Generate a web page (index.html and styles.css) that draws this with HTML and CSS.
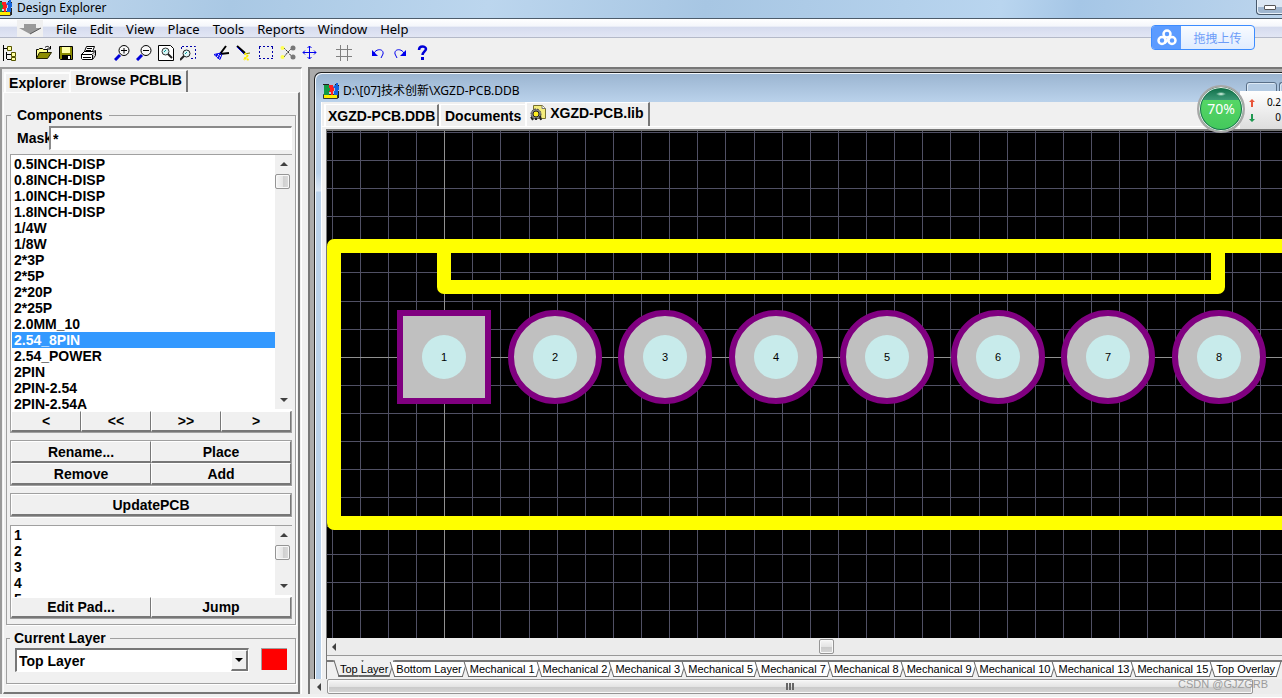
FILE: index.html
```html
<!DOCTYPE html>
<html lang="en">
<head>
<meta charset="utf-8">
<title>Design Explorer</title>
<link rel="stylesheet" href="styles.css">
</head>
<body>
<svg class="defs" aria-hidden="true">
  <symbol id="puzzle" viewBox="0 0 16 16">
    <path fill="#ffee00" stroke="#333" d="M.5 11.500h14v4h-14z"/>
    <path fill="#119a44" d="M1 2h5v3h1v3H6v4H1z"/>
    <path fill="#ff1e1e" d="M6 2h4v2h1v4h-1v4H8V9H6V8h1V5H6z"/>
    <path fill="#1464dc" d="M10 4l2-2h1V0h2v3h1v4h-1v5h-4V8h1V5h-1z"/>
    <path fill="#222" d="M12 1h1v1h-1zM15 2h1v1h-1zM0 1h6v1H0zM15 8h1v7h-1z"/>
  </symbol>
  <symbol id="lens" viewBox="0 0 16 16">
    <path stroke="#0000d8" stroke-width="3" d="M6 10l-5 5"/>
    <circle cx="10" cy="5.500" r="5" fill="#f8f8f8" stroke="#000"/>
  </symbol>
</svg>

<header class="titlebar">
  <svg class="app-icon"><use href="#puzzle"/></svg>
  <h1>Design Explorer</h1>
  <button class="caption-btn" aria-label="Minimize"><span></span></button>
</header>

<nav class="menubar">
  <button class="menu-arrow" aria-label="System menu"><svg width="22" height="12" viewBox="0 0 22 12"><path fill="#999" d="M5 1h12v4h5L11 11 0 5h5z"/><path fill="none" stroke="#555" d="M22 5L11 11"/></svg></button>
  <button>File</button><button>Edit</button><button>View</button><button>Place</button><button>Tools</button><button>Reports</button><button>Window</button><button>Help</button>
</nav>

<div class="toolbar">
  <div class="tools">
    <button aria-label="Panel tree"><svg viewBox="0 0 16 16"><path fill="none" stroke="#000" d="M1.500 0v16M1 3.500h4M4.500 7v7M5 9.500h4M5 14.500h4"/><path fill="#ffffa0" stroke="#555500" d="M5.500 1.500h4v4h-4zM9.500 7.500h4v4h-4zM9.500 12.500h4v3h-4z"/></svg></button>
  </div>
  <div class="tools">
    <button aria-label="Open"><svg viewBox="0 0 16 16"><path fill="#ffff90" stroke="#000" d="M.5 13.500v-9h2l1-1h3l1 1h4v3"/><path fill="#8c8c00" stroke="#222200" d="M.5 13.500l3-6h12l-4 6z"/><path fill="none" stroke="#000" d="M9 2.500c2-2 4-1 5 1M14.500 1v3H11"/></svg></button>
    <button aria-label="Save"><svg viewBox="0 0 16 16"><path fill="#8c8c00" stroke="#000" d="M1.500 1.500h13v13h-12l-1-1z"/><path fill="#ffffa8" d="M4 2h8v6H4z"/><path fill="#000" d="M4 10h9v5H4z"/><path fill="#fff" d="M10 11h2v3h-2z"/></svg></button>
    <button aria-label="Print"><svg viewBox="0 0 16 16"><path fill="#fff" stroke="#000" d="M4.500 6.500l2-5h8l-2 5zM1.500 9.500l3-3h9l2-1v5l-3 4h-10l-1-1z"/><path fill="none" stroke="#000" d="M7 3.500h5M6 5.500h5M1 9.500h11l3-3M12.500 10v4M3 12.500h8"/><path fill="#bbb" d="M13 10l2-2v2l-2 3z"/></svg></button>
  </div>
  <div class="tools">
    <button aria-label="Zoom in"><svg viewBox="0 0 16 16"><use href="#lens"/><path stroke="#000" d="M7 5.500h6M10 3v5.500"/></svg></button>
    <button aria-label="Zoom out"><svg viewBox="0 0 16 16"><use href="#lens"/><path stroke="#000" d="M7 5.500h6"/></svg></button>
    <button aria-label="Zoom document"><svg viewBox="0 0 16 16"><path fill="#fff" stroke="#000" d="M.5.5h12l3 3v12H.5z"/><circle cx="7.500" cy="6.500" r="3.500" fill="#d8f4f4" stroke="#333"/><path stroke="#222" stroke-width="2" d="M10 9l4 4"/><path stroke="#009999" d="M6 7l2-2"/></svg></button>
    <button aria-label="Zoom area"><svg viewBox="0 0 16 16"><path fill="none" stroke="#0000a8" stroke-dasharray="2 2" d="M2 1.500h13.500v12H9M1.500 2v3"/><circle cx="6.500" cy="8.500" r="3.500" fill="#e0f6f6" stroke="#222"/><path stroke="#222" stroke-width="2" d="M4 11l-4 4"/><path stroke="#009999" d="M5 9l2-2"/></svg></button>
  </div>
  <div class="tools">
    <button aria-label="Cut"><svg viewBox="0 0 16 16"><path stroke="#000" stroke-width="2" d="M6 9l6-8M6 9l9-1"/><path fill="none" stroke="#0000ee" d="M7 8L0 9.500l6 5L8 9M2 9l5 4M4 9L2 11M6 8L4 14"/></svg></button>
    <button aria-label="Paste"><svg viewBox="0 0 16 16"><path stroke="#000" stroke-width="2" d="M1 1l8 7"/><path stroke="#0000d8" d="M1 2l7 7"/><path stroke="#777700" d="M8 9l6-1"/><path stroke="#ffee00" stroke-width="2" stroke-dasharray="2 1" d="M9 8l3 5M8 13l5 2M12 10l-4 5"/></svg></button>
    <button aria-label="Select area"><svg viewBox="0 0 16 16"><path fill="none" stroke="#0000a8" stroke-dasharray="2 2" d="M1 1.500h14M1 13.500h14M1.500 2v12M14.500 2v12"/></svg></button>
    <button aria-label="Deselect"><svg viewBox="0 0 16 16"><path fill="none" stroke="#222" stroke-dasharray="2 1" d="M4 3l4 4 4-4M4 12l4-5 4 5"/><circle cx="2.500" cy="3" r="2" fill="#ffff50"/><circle cx="2.500" cy="12" r="2" fill="#ffff50"/><circle cx="13" cy="3" r="2.500" fill="#777"/><circle cx="13" cy="12" r="2.500" fill="#777"/></svg></button>
    <button aria-label="Move"><svg viewBox="0 0 16 16"><path fill="none" stroke="#0000ee" d="M7.500 1v13M1 7.500h13M5.500 3l2-2 2 2M5.500 12l2 2 2-2M3 5.500l-2 2 2 2M12 5.500l2 2-2 2"/></svg></button>
  </div>
  <div class="tools">
    <button aria-label="Grid"><svg viewBox="0 0 16 16"><path stroke="#808080" d="M4.500 0v16M11.500 0v16M0 4.500h16M0 11.500h16"/></svg></button>
  </div>
  <div class="tools">
    <button aria-label="Undo"><svg viewBox="0 0 16 16"><path fill="none" stroke="#0000ee" d="M4 8c3-5 10-4 9 1l-2 4"/><path fill="#0000ee" d="M2 5v6h6z"/></svg></button>
    <button aria-label="Redo"><svg viewBox="0 0 16 16"><path fill="none" stroke="#0000ee" d="M12 8C9 3 2 4 3 9l2 4"/><path fill="#0000ee" d="M14 5v6H8z"/></svg></button>
    <button aria-label="Help"><svg viewBox="0 0 16 16"><path fill="none" stroke="#0000d8" stroke-width="2.500" d="M5 5c0-5 7-4 7-1 0 2-3.500 3-3.500 6"/><path fill="#0000d8" d="M7 12h3v3H7z"/></svg></button>
  </div>
</div>

<main class="workspace">
  <aside class="sidebar">
    <div class="side-tabs">
      <button class="tab">Explorer</button>
      <button class="tab active">Browse PCBLIB</button>
    </div>
    <div class="side-page">
      <fieldset>
        <legend>Components</legend>
        <div class="mask"><label for="mask">Mask</label><input id="mask" type="text" value="*"></div>
        <div class="listbox">
          <select size="16" aria-label="Components">
            <option>0.5INCH-DISP</option><option>0.8INCH-DISP</option><option>1.0INCH-DISP</option><option>1.8INCH-DISP</option>
            <option>1/4W</option><option>1/8W</option><option>2*3P</option><option>2*5P</option><option>2*20P</option><option>2*25P</option>
            <option>2.0MM_10</option><option selected>2.54_8PIN</option><option>2.54_POWER</option><option>2PIN</option><option>2PIN-2.54</option><option>2PIN-2.54A</option>
          </select>
          <div class="vscroll"><button class="up" aria-label="Scroll up"></button><span class="thumb"></span><button class="down" aria-label="Scroll down"></button></div>
        </div>
        <div class="buttons four"><button>&lt;</button><button>&lt;&lt;</button><button>&gt;&gt;</button><button>&gt;</button></div>
        <div class="buttons two spaced"><button>Rename...</button><button>Place</button><button>Remove</button><button>Add</button></div>
        <div class="buttons one spaced"><button>UpdatePCB</button></div>
        <div class="listbox pins">
          <select size="4" aria-label="Pads">
            <option>1</option><option>2</option><option>3</option><option>4</option><option>5</option><option>6</option><option>7</option><option>8</option>
          </select>
          <div class="vscroll"><button class="up" aria-label="Scroll up"></button><span class="thumb"></span><button class="down" aria-label="Scroll down"></button></div>
        </div>
        <div class="buttons two"><button>Edit Pad...</button><button>Jump</button></div>
      </fieldset>
      <fieldset class="layer">
        <legend>Current Layer</legend>
        <div class="layer-row">
          <div class="combo"><select aria-label="Current layer"><option>Top Layer</option><option>Bottom Layer</option></select><span class="drop"></span></div>
          <button class="swatch" aria-label="Layer colour"></button>
        </div>
      </fieldset>
    </div>
  </aside>

  <section class="mdi">
    <div class="doc">
      <div class="doc-title">
        <svg class="app-icon"><use href="#puzzle"/></svg>
        <h2>D:\[07]技术创新\XGZD-PCB.DDB</h2>
        <button aria-label="Minimize document"></button><button class="cut" aria-label="Restore document"></button>
      </div>
      <div class="doc-body">
        <div class="doc-tabs">
          <button class="tab divided">XGZD-PCB.DDB</button>
          <button class="tab">Documents</button>
          <button class="tab active"><svg width="16" height="16" viewBox="0 0 16 16"><path fill="#f4ec7c" stroke="#777030" d="M3.500.5h9l3 3v10h-12z"/><path fill="#fff" stroke="#777" d="M12 .5v3h3.500"/><circle cx="6" cy="9" r="5" fill="#888" stroke="#444" stroke-dasharray="2 1"/><circle cx="6" cy="9" r="3" fill="#ffee20" stroke="#222"/><path stroke="#222" stroke-width="2" d="M1 12l2 3M10 11l1 4M6 13v2"/></svg>XGZD-PCB.lib</button>
        </div>
        <div class="view">
          <div class="board">
            <svg class="pcb" width="100%" height="100%" role="img" aria-label="2.54_8PIN footprint">
              <rect width="100%" height="100%" fill="#000"/>
              <g id="grid"></g>
              <g class="track"><path d="M3000 115H7V392H3000"/><path d="M117 115V156H891V115"/></g>
              <g id="pads"></g>
            </svg>
          </div>
          <div class="hscroll inner"><button class="left" aria-label="Scroll left"></button><span class="thumb"></span></div>
          <div class="layers">
            <button class="active">Top Layer</button><button>Bottom Layer</button><button>Mechanical 1</button><button>Mechanical 2</button><button>Mechanical 3</button><button>Mechanical 5</button><button>Mechanical 7</button><button>Mechanical 8</button><button>Mechanical 9</button><button>Mechanical 10</button><button>Mechanical 13</button><button>Mechanical 15</button><button>Top Overlay</button>
          </div>
        </div>
      </div>
    </div>
    <div class="hscroll outer"><button class="left" aria-label="Scroll left"></button><span class="thumb"><i></i><i></i><i></i></span></div>
  </section>
</main>

<button class="upload"><span class="cloud"><svg width="20" height="18" viewBox="0 0 20 18"><g fill="none" stroke="#fff" stroke-width="2.500"><circle cx="10" cy="5" r="3.500"/><circle cx="5" cy="11.500" r="3.500"/><circle cx="15" cy="11.500" r="3.500"/><path d="M7.500 14l5-5"/></g></svg></span><span class="upload-text">拖拽上传</span></button>

<div class="net"><p><svg width="6" height="8" viewBox="0 0 6 8"><path fill="#e8553a" d="M3 0l3 3H4v5H2V3H0z"/></svg><span>0.2</span></p><p><svg width="6" height="8" viewBox="0 0 6 8"><path fill="#1f9850" d="M3 8L0 5h2V0h2v5h2z"/></svg><span>0</span></p></div>
<div class="ball"><span>70%</span></div>
<div class="watermark">CSDN @GJZGRB</div>
<script src="board.js"></script>
</body>
</html>
```

FILE: styles.css
```css
* { box-sizing: border-box; }
html, body { height: 100%; }
body {
  margin: 0; display: flex; flex-direction: column; overflow: hidden; position: relative;
  background: #f0f0f0; color: #000;
  font: bold 14px/16px "Liberation Sans", Arial, sans-serif;
}
button, input, select, option { font: inherit; color: inherit; margin: 0; padding: 0; border: 0; border-radius: 0; background: none; }
h1, h2, p { margin: 0; font: inherit; }
.defs { position: absolute; width: 0; height: 0; }
.app-icon { width: 16px; height: 16px; flex: none; }

.titlebar {
  height: 19px; flex: none; display: flex; align-items: flex-start; padding-left: 0;
  background: linear-gradient(100deg, #c3d9ee 0, #a9c8e4 18%, #bcd6ee 38%, #a7c6e3 55%, #b9d5ef 78%, #a5c6e6 84%, #bcd5ed 100%);
  border-bottom: 1px solid #4d5c6b;
}
.titlebar .app-icon { margin-left: -4px; }
.titlebar h1 { flex: 1; padding-left: 5px; font: 12px/16px "Noto Sans", "Open Sans", sans-serif; }
.caption-btn { width: 26px; height: 15px; border: 1px solid #46586b; border-width: 0 0 1px 1px; border-bottom-left-radius: 4px; background: linear-gradient(#dbe7f3 50%, #9fb6cf 50%); box-shadow: inset 1px -1px #e8f1fa; display: grid; place-items: center; }
.caption-btn span { width: 12px; height: 5px; background: #fff; border: 1px solid #555; border-radius: 1px; }

.menubar {
  height: 19px; flex: none; display: flex; align-items: center; gap: 13px; padding: 1px 0 0 17px;
  background: linear-gradient(#fff 0, #f4f6fb 40%, #d5dbee 45%, #e2e6f4 100%);
  border-bottom: 1px solid #b4b9c8;
  font: 13px/18px "Noto Sans", "Open Sans", sans-serif;
}
.menu-arrow { width: 26px; height: 17px; background: #f0f0f0; display: grid; place-items: center; }

.toolbar { height: 29px; flex: none; display: flex; align-items: center; gap: 18px; padding-left: 2px; }
.tools { display: flex; gap: 6px; }
.tools button { width: 16px; height: 16px; }
.tools svg { display: block; width: 16px; height: 16px; }

.workspace { flex: 1; min-height: 0; display: flex; gap: 6px; padding-bottom: 3px; border-bottom: 1px solid #fff; }

.sidebar { width: 302px; flex: none; display: flex; flex-direction: column; padding: 1px 1px 0 1px; border: 2px solid #999; border-right: 1px solid #fff; border-bottom: 0; }
.tab { font-size: 14px; white-space: nowrap; }
.side-tabs { display: flex; align-items: flex-end; height: 22px; padding-left: 1px; }
.side-tabs .tab { height: 20px; width: 66px; border: 2px solid #fdfdfd; border-bottom: 0; border-right-width: 1px; padding-bottom: 1px; }
.side-tabs .tab.active { height: 22px; width: 118px; border: 1px solid #fdfdfd; border-bottom: 0; border-right: 2px solid #777; padding-bottom: 3px; }
.side-page { flex: 1; padding: 14px 2px 0 2px; border: 1px solid #fdfdfd; border-right: 2px solid #777; border-bottom: 2px solid #777; }

fieldset { min-width: 0; margin: 0 0 5px; padding: 0 3px 5px; border: 1px solid #a0a0a0; box-shadow: 1px 1px #fff; }
legend { margin-left: 1px; padding: 0 6px; background: #f0f0f0; }
.mask { display: flex; align-items: center; margin: 3px 0 4px; padding-left: 7px; }
.mask label { width: 32px; flex: none; }
.mask input { position: relative; flex: 1; min-width: 0; height: 24px; padding: 0 2px; background: #fff; border: 1px solid #fff; border-top: 2px solid #8a8a8a; border-left: 2px solid #8a8a8a; outline: 0; }

.listbox { display: flex; height: 257px; background: #fff; border: 1px solid #a0a0a0; border-width: 1px 0 0 1px; }
.listbox select { flex: 1; min-width: 0; overflow: hidden; scrollbar-width: none; outline: 0; padding: 1px 0 0 1px; }
.listbox option { height: 16px; min-height: 16px; padding: 0 2px; line-height: 16px; }
.listbox option:checked { background: #3399ff linear-gradient(#3399ff, #3399ff); color: #fff; -webkit-text-fill-color: #fff; }
.listbox.pins { height: 72px; margin-top: 8px; }
.vscroll { width: 17px; flex: none; display: flex; flex-direction: column; background: #f0f0f0; border-bottom: 2px solid #fff; }
.vscroll button { height: 18px; display: grid; place-items: center; }
.vscroll .down { margin-top: auto; }
.up::before, .down::before, .left::before { content: ""; border: 4px solid transparent; }
.up::before { border-bottom-color: #404040; border-top: 0; }
.down::before { border-top-color: #404040; border-bottom: 0; }
.left::before { border-right-color: #404040; border-left: 0; }
.thumb { border: 1px solid #959595; border-radius: 2px; background: linear-gradient(90deg, #f5f5f5, #e6e6e6 50%, #cfcfcf 55%, #dcdcdc); box-shadow: inset 0 0 0 1px #f8f8f8; }
.vscroll .thumb { width: 15px; height: 15px; margin-top: 1px; }

.buttons { display: grid; border: 1px solid #a0a0a0; border-top: 0; }
.buttons.four { grid-template-columns: repeat(4, 1fr); }
.buttons.two { grid-template-columns: 1fr 1fr; }
.buttons.spaced { margin: 7px 0; border-top: 1px solid #a0a0a0; box-shadow: 0 1px #fff; }
.buttons button { height: 22px; border: 1px solid #fff; border-right: 1px solid #777; border-bottom: 2px solid #777; }
.buttons.four button, .pins + .buttons button { height: 21px; }

.layer { margin: 0; padding: 0 8px 11px; }
.layer legend { margin-left: -5px; padding: 0 4px; }
.layer-row { display: flex; gap: 12px; padding-top: 2px; }
.combo { flex: 1; display: flex; height: 24px; background: #fff; border: 1px solid #fff; border-top: 2px solid #777; border-left: 2px solid #777; }
.combo select { flex: 1; appearance: none; padding-left: 2px; outline: 0; }
.drop { width: 17px; display: grid; place-items: center; background: #f0f0f0; border: 1px solid #fff; border-right: 2px solid #777; border-bottom: 2px solid #777; }
.drop::before { content: ""; border: 4px solid transparent; border-top-color: #000; border-bottom: 0; }
.swatch { width: 26px; height: 22px; background: #f00; border: 1px solid #a0a0a0; border-width: 1px 0 0 1px; }

.mdi { flex: 1; min-width: 0; display: flex; flex-direction: column; border: 2px solid #777; border-width: 2px 0 0 2px; background: #ababab; }
.doc { flex: 1; min-height: 0; margin: 3px 0 0 4px; display: flex; flex-direction: column; border: 1px solid #202020; border-width: 1px 0 0 1px; border-top-left-radius: 7px; background: linear-gradient(#9ab4d0, #b9d1ea 28px, #b9d1ea 100px, #dce8f6 118px, #b9d1ea 119px); box-shadow: inset 1px 1px #f4f8fc; padding-left: 6px; }
.doc-title { height: 29px; flex: none; display: flex; align-items: center; gap: 4px; padding: 6px 0 0 2px; }
.doc-title h2 { flex: 1; font: 12px/16px "Noto Sans", "Noto Sans CJK SC", sans-serif; }
.doc-title button { align-self: flex-end; width: 31px; height: 20px; border: 1px solid #596f88; border-radius: 3px; background: #b4cbe3; box-shadow: inset 1px 1px #dce9f5; }
.doc-title .cut { width: 3px; margin-left: -2px; border-right: 0; border-radius: 3px 0 0 3px; }
.doc-body { flex: 1; min-height: 0; display: flex; flex-direction: column; background: #f0f0f0; border-left: 1px solid #fff; }
.doc-tabs { height: 25px; flex: none; display: flex; align-items: flex-end; padding-left: 2px; border-bottom: 1px solid #fff; }
.doc-tabs .tab { height: 22px; padding: 0 4px; border-left: 2px solid #fff; border-top: 1px solid #fff; }
.doc-tabs .divided { width: 115px; padding: 0 2px; border-right: 2px solid #777; }
.doc-tabs .active { height: 24px; display: flex; align-items: center; gap: 4px; padding: 0 4px 4px 3px; border-right: 2px solid #777; }
.view { flex: 1; min-height: 0; margin: 2px 0 0 4px; display: flex; flex-direction: column; border: 2px solid #777; border-width: 2px 0 0 1px; }
.board { flex: 1; min-height: 0; overflow: hidden; }
.pcb { display: block; font: 11px "Liberation Sans", Arial, sans-serif; }
.minor { fill: #505064; }
.major { fill: #909090; }
.track { fill: none; stroke: #ff0; stroke-width: 14px; stroke-linejoin: round; stroke-linecap: round; }
.pad { fill: #c0c0c0; stroke: #800080; stroke-width: 6px; }
.hole { fill: #c8ebeb; }

.hscroll { display: flex; align-items: center; background: #ececec; }
.hscroll button { width: 14px; height: 14px; flex: none; display: grid; place-items: center; }
.hscroll .thumb { background: linear-gradient(#f6f6f6, #e4e4e4 50%, #cacaca 55%, #d6d6d6); }
.inner { height: 18px; flex: none; border-bottom: 1px solid #999; }
.inner .thumb { width: 15px; height: 15px; margin-left: 50%; }
.layers { height: 23px; flex: none; display: flex; align-items: flex-start; overflow: hidden; padding: 5px 0 0 9px; background: linear-gradient(#777, #777) 0 4px / 100% 2px no-repeat #f0f0f0; font: 11px/14px "Liberation Sans", Arial, sans-serif; }
.layers button { position: relative; isolation: isolate; flex: none; height: 16px; padding: 0 4px; white-space: nowrap; }
.layers button::before, .layers button::after { content: ""; position: absolute; z-index: -1; top: 1px; bottom: 0; background: #fff; border-bottom: 1px solid #666; }
.layers button::before { left: 0; right: 50%; border-left: 1px solid #666; transform: skewX(17deg); }
.layers button::after { left: 45%; right: 0; border-right: 1px solid #666; transform: skewX(-17deg); }
.layers .active::before, .layers .active::after { top: -1px; background: #f0f0f0; border-bottom-width: 2px; }
.outer { height: 15px; flex: none; }
.outer button { width: 17px; }
.outer .thumb { flex: 1; height: 15px; margin-right: 29px; display: flex; align-items: center; justify-content: center; gap: 1px; }
.outer i { width: 2px; height: 7px; background: #666; }

.upload { position: absolute; top: 25px; right: 27px; width: 104px; height: 25px; display: flex; overflow: hidden; border: 1px solid #3c8cff; border-radius: 4px; background: linear-gradient(#f8fbff, #e0ecff); color: #6c9cf8; font: 12px/23px "Noto Sans CJK SC", sans-serif; }
.cloud { width: 29px; height: 23px; display: grid; place-items: center; background: #5b9bff; }
.upload-text { flex: 1; }
.net { position: absolute; top: 91px; right: 0; width: 42px; height: 38px; padding: 4px 1px 0 9px; background: linear-gradient(#fff, #ddd); font: 10px/15px "Noto Sans", sans-serif; }
.net p { display: flex; align-items: center; justify-content: space-between; }
.ball { position: absolute; top: 85px; right: 37px; width: 48px; height: 48px; display: grid; place-items: center; border: 2px solid #a8a8a8; border-radius: 50%; background: radial-gradient(ellipse 5px 2px at 50% 7px, #e8fff0, transparent), linear-gradient(#0c6a45 0, #3c9a76 13px, #55d765 13px, #43c75c 100%); box-shadow: inset 0 0 0 1px #eee, inset 0 0 0 2px #117448; color: #fff; font: 14px/16px "Noto Sans", sans-serif; }
.watermark { position: absolute; right: 14px; bottom: 6px; color: #9c9c9c; font: 11px/16px "Liberation Sans", Arial, sans-serif; }
```

FILE: board.js
```js
const NS = "http://www.w3.org/2000/svg";
const STEP = 28.125;
const ORIGIN = { x: 117, y: 226 };

function add(parent, name, attrs, text) {
  const el = document.createElementNS(NS, name);
  for (const key in attrs) el.setAttribute(key, attrs[key]);
  if (text) el.textContent = text;
  parent.appendChild(el);
}

const grid = document.getElementById("grid");
for (let k = -8; k < 100; k++) {
  if (k >= -4 && k !== 0) add(grid, "rect", { class: "minor", x: Math.floor(ORIGIN.x + 0.7 + k * STEP), y: 0, width: 1, height: "100%" });
  if (k !== 0) add(grid, "rect", { class: "minor", x: 0, y: Math.floor(ORIGIN.y + 0.3 + k * STEP), width: "100%", height: 1 });
}
add(grid, "rect", { class: "major", x: ORIGIN.x, y: 0, width: 1, height: "100%" });
add(grid, "rect", { class: "major", x: 0, y: ORIGIN.y, width: "100%", height: 1 });

// Eight pads, 110.7 units apart; the first one is square.
const pads = document.getElementById("pads");
for (let n = 0; n < 8; n++) {
  const x = Math.round(ORIGIN.x + n * 110.7);
  if (n === 0) add(pads, "rect", { class: "pad", x: x - 44, y: ORIGIN.y - 44, width: 88, height: 88 });
  else add(pads, "circle", { class: "pad", cx: x, cy: ORIGIN.y, r: 44 });
  add(pads, "circle", { class: "hole", cx: x, cy: ORIGIN.y, r: 22 });
  add(pads, "text", { x: x, y: ORIGIN.y + 4, "text-anchor": "middle" }, String(n + 1));
}
```
